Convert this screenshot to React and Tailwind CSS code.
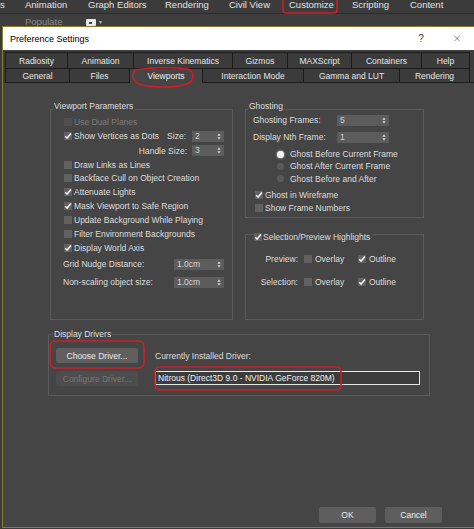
import React from "react";
import { X } from "lucide-react";

const menus = [
  { t: "s", w: "w-[25px]" },
  { t: "Animation", w: "w-[63px]" },
  { t: "Graph Editors", w: "w-[77px]" },
  { t: "Rendering", w: "w-[64px]" },
  { t: "Civil View", w: "w-[60px]" },
  { t: "Customize", w: "w-[63px]" },
  { t: "Scripting", w: "w-[58px]" },
  { t: "Content", w: "w-[64px]" },
];

const tabsTop = [
  { t: "Radiosity", w: "w-[62px]" },
  { t: "Animation", w: "w-[66px]" },
  { t: "Inverse Kinematics", w: "w-[99px]" },
  { t: "Gizmos", w: "w-[55px]" },
  { t: "MAXScript", w: "w-[64px]" },
  { t: "Containers", w: "w-[70px]" },
  { t: "Help", w: "w-[49px] border-r" },
];

const tabsBottom = [
  { t: "General", w: "w-[64px]" },
  { t: "Files", w: "w-[60px]" },
  { t: "Viewports", w: "w-[73px]", active: true },
  { t: "Interaction Mode", w: "w-[101px]" },
  { t: "Gamma and LUT", w: "w-[96px]" },
  { t: "Rendering", w: "w-[71px] border-r" },
];

// left group rows: [label, checked, disabled, height class]
const viewportChecks = [
  ["Draw Links as Lines", false, false, "h-[13px]"],
  ["Backface Cull on Object Creation", false, false, "h-[14px]"],
  ["Attenuate Lights", true, false, "h-[14px]"],
  ["Mask Viewport to Safe Region", true, false, "h-[13px]"],
  ["Update Background While Playing", false, false, "h-[15px]"],
  ["Filter Environment Backgrounds", false, false, "h-[14px]"],
  ["Display World Axis", true, false, "h-[14px]"],
];

const Check = ({ on, dim }) => (
  <span
    className={`inline-flex w-[8px] h-[8px] shrink-0 items-center justify-center ${
      dim ? "bg-[#4f4f4f]" : "bg-[#616161]"
    }`}
  >
    {on && (
      <svg width="8" height="8" viewBox="0 0 8 8">
        <path d="M1.2 4.2 L3.1 6.1 L6.9 1.5" fill="none" stroke="#f4f4f4" strokeWidth="1.5" />
      </svg>
    )}
  </span>
);

const Radio = ({ on }) => (
  <span
    className={`w-[7px] h-[7px] rounded-full shrink-0 ${
      on ? "bg-[#f2f2f2] shadow-[0_0_2px_#ffffff]" : "bg-[#5b5b5b]"
    }`}
  />
);

const Spin = ({ value, w }) => (
  <div className={`${w} h-[11px] bg-[#5c5c5c] flex items-center justify-between pl-[3px] pr-[3px] text-[#d4d4d4] leading-[11px]`}>
    <span>{value}</span>
    <svg width="4" height="7" viewBox="0 0 4 7">
      <path d="M2 0.4 L3.7 2.8 H0.3Z M2 6.6 L3.7 4.2 H0.3Z" fill="#dadada" />
    </svg>
  </div>
);

const Btn = ({ children, w, dim }) => (
  <div
    className={`${w} h-[15px] rounded-[2px] flex items-center justify-center ${
      dim ? "bg-[#4d4d4d] text-[#777777]" : "bg-[#5f5f5f] text-[#ececec]"
    }`}
  >
    {children}
  </div>
);

export default function App() {
  return (
    <div className="relative w-[474px] h-[529px] overflow-hidden bg-[#3b3b3b] font-['Liberation_Sans',Arial,sans-serif] text-[8.5px] text-[#dedede] leading-[10px] flex flex-col">
      {/* main menu bar */}
      <div className="h-[14px] flex border-b border-[#2c2c2c] text-[9.5px] text-[#e2e2e2] shrink-0">
        {menus.map((m) => (
          <div key={m.t} className={`${m.w} shrink-0 leading-[10px] pt-0`}>
            {m.t}
          </div>
        ))}
      </div>

      {/* ribbon row under menu */}
      <div className="h-[12px] flex items-start shrink-0 overflow-hidden bg-[#3e3e3e]">
        <span className="ml-[25px] mt-[3px] text-[9.5px] text-[#8a8a8a]">Populate</span>
        <span className="ml-[23px] mt-[5px] flex items-start gap-[3px]">
          <span className="w-[10px] h-[7px] bg-[#e8e8e8] rounded-[1px] flex items-center justify-center">
            <span className="w-[3px] h-[2px] bg-[#444444]" />
          </span>
          <span className="text-[6px] text-[#bbbbbb] leading-[6px]">▾</span>
        </span>
      </div>

      {/* dialog */}
      <div className="ml-[2px] w-[480px] h-[502px] shrink-0 border-l border-t border-b border-[#8f7d2e] flex flex-col bg-[#454545]">
        <div className="h-[23px] bg-white flex items-center text-black text-[9px] shrink-0">
          <span className="pl-[7px] flex-1">Preference Settings</span>
          <span className="w-[10px] text-center text-[10px] text-[#333333]">?</span>
          <span className="w-[10px] ml-[26px] mr-[20px] flex items-center justify-center">
            <X size={11} strokeWidth={1.3} color="#222222" />
          </span>
        </div>

        {/* tabs */}
        <div className="pt-[2px] bg-[#3d3d3d] shrink-0">
          <div className="flex pl-[2px] h-[16px]">
            {tabsTop.map((t) => (
              <div
                key={t.t}
                className={`${t.w} shrink-0 border-l border-t border-[#1c1c1c] bg-[#3b3b3b] text-[#e6e6e6] flex items-center justify-center`}
              >
                {t.t}
              </div>
            ))}
          </div>
          <div className="flex pl-[2px] h-[15px]">
            {tabsBottom.map((t) =>
              t.active ? (
                <div
                  key={t.t}
                  className={`${t.w} shrink-0 border-l border-t border-[#1c1c1c] bg-[#454545] text-[#f0f0f0] flex items-center justify-center`}
                >
                  {t.t}
                </div>
              ) : (
                <div
                  key={t.t}
                  className={`${t.w} shrink-0 border-l border-t border-b border-[#1c1c1c] bg-[#3b3b3b] text-[#e6e6e6] flex items-center justify-center`}
                >
                  {t.t}
                </div>
              )
            )}
            <div className="flex-1 border-b border-[#1c1c1c]" />
          </div>
        </div>

        {/* page content */}
        <div className="flex-1 flex flex-col pl-[47px] pr-[40px]">
          <div className="flex gap-[12px] mt-[18px]">
            {/* Viewport Parameters */}
            <fieldset className="w-[183px] border border-[#5b5b5b] pb-[31px] shrink-0">
              <legend className="ml-[2px] px-[1px] pb-[6px] leading-[10px]">Viewport Parameters</legend>
              <div className="h-[14px] -mt-[2px] flex items-center pl-[13px] gap-[2px] text-[#7c7c7c]">
                <Check dim />
                <span>Use Dual Planes</span>
              </div>
              <div className="h-[14px] flex items-center pl-[13px] pr-[8px] gap-[2px]">
                <Check on />
                <span className="flex-1">Show Vertices as Dots</span>
                <span className="mr-[4px]">Size:</span>
                <Spin value="2" w="w-[32px]" />
              </div>
              <div className="h-[15px] flex items-center justify-end pr-[8px]">
                <span className="mr-[5px]">Handle Size:</span>
                <Spin value="3" w="w-[32px]" />
              </div>
              {viewportChecks.map(([label, on, dim, h]) => (
                <div key={label} className={`${h} flex items-center pl-[13px] gap-[2px]`}>
                  <Check on={on} dim={dim} />
                  <span>{label}</span>
                </div>
              ))}
              <div className="h-[12px] mt-[3px] flex items-center pl-[12px] pr-[8px]">
                <span className="flex-1">Grid Nudge Distance:</span>
                <Spin value="1.0cm" w="w-[50px]" />
              </div>
              <div className="h-[12px] mt-[6px] flex items-center pl-[12px] pr-[8px]">
                <span className="flex-1">Non-scaling object size:</span>
                <Spin value="1.0cm" w="w-[50px]" />
              </div>
            </fieldset>

            {/* right column */}
            <div className="w-[179px] flex flex-col shrink-0">
              <fieldset className="border border-[#5b5b5b] pb-[3px]">
                <legend className="ml-[2px] px-[1px] pb-[6px] leading-[10px]">Ghosting</legend>
                <div className="h-[12px] -mt-[3px] flex items-center pl-[7px]">
                  <span className="w-[84px]">Ghosting Frames:</span>
                  <Spin value="5" w="w-[52px]" />
                </div>
                <div className="h-[12px] mt-[5px] flex items-center pl-[7px]">
                  <span className="w-[84px]">Display Nth Frame:</span>
                  <Spin value="1" w="w-[52px]" />
                </div>
                <div className="h-[12px] mt-[5px] flex items-center pl-[31px] gap-[6px]">
                  <Radio on />
                  <span>Ghost Before Current Frame</span>
                </div>
                <div className="h-[12px] flex items-center pl-[31px] gap-[6px]">
                  <Radio />
                  <span>Ghost After Current Frame</span>
                </div>
                <div className="h-[13px] flex items-center pl-[31px] gap-[6px]">
                  <Radio />
                  <span>Ghost Before and After</span>
                </div>
                <div className="h-[13px] mt-[3px] flex items-center pl-[9px] gap-[2px]">
                  <Check on />
                  <span>Ghost in Wireframe</span>
                </div>
                <div className="h-[13px] flex items-center pl-[9px] gap-[2px]">
                  <Check />
                  <span>Show Frame Numbers</span>
                </div>
              </fieldset>

              <fieldset className="mt-[8px] border border-[#5b5b5b] pt-[11px] pb-[31px]">
                <legend className="ml-[8px] pt-[6px] leading-[10px] flex items-center gap-[1px] pr-[2px]">
                  <Check on />
                  <span>Selection/Preview Highlights</span>
                </legend>
                <div className="h-[12px] flex items-center pl-[2px]">
                  <span className="w-[50px] text-right">Preview:</span>
                  <span className="w-[54px] ml-[6px] flex items-center gap-[3px]">
                    <Check />
                    <span>Overlay</span>
                  </span>
                  <span className="flex items-center gap-[3px]">
                    <Check on />
                    <span>Outline</span>
                  </span>
                </div>
                <div className="h-[12px] mt-[11px] flex items-center pl-[2px]">
                  <span className="w-[50px] text-right">Selection:</span>
                  <span className="w-[54px] ml-[6px] flex items-center gap-[3px]">
                    <Check />
                    <span>Overlay</span>
                  </span>
                  <span className="flex items-center gap-[3px]">
                    <Check on />
                    <span>Outline</span>
                  </span>
                </div>
              </fieldset>
            </div>
          </div>

          {/* Display Drivers */}
          <fieldset className="mt-[9px] -ml-[2px] w-[382px] border border-[#5b5b5b] pt-[9px] pb-[9px] pl-[7px] pr-[9px]">
            <legend className="ml-[-3px] px-[1px] leading-[10px]">Display Drivers</legend>
            <div className="flex">
              <div className="flex flex-col gap-[8px] shrink-0">
                <Btn w="w-[82px]">Choose Driver...</Btn>
                <Btn w="w-[82px]" dim>
                  Configure Driver...
                </Btn>
              </div>
              <div className="flex-1 ml-[17px] flex flex-col">
                <span className="mt-[3px] leading-[10px]">Currently Installed Driver:</span>
                <div className="mt-[10px] h-[14px] border border-[#e8e8e8] bg-[#3c3c3c] flex items-center pl-[2px] text-[#f2f2f2]">
                  Nitrous (Direct3D 9.0 - NVIDIA GeForce 820M)
                </div>
              </div>
            </div>
          </fieldset>

          <div className="mt-auto pb-[4px] flex justify-end gap-[9px]">
            <div className="w-[57px] h-[16px] rounded-[2px] bg-[#5e5e5e] text-[#ececec] flex items-center justify-center">OK</div>
            <div className="w-[57px] h-[16px] rounded-[2px] bg-[#5e5e5e] text-[#ececec] flex items-center justify-center">Cancel</div>
          </div>
        </div>
      </div>

      {/* red hand-drawn annotations */}
      <svg className="absolute inset-0 pointer-events-none" width="474" height="529" viewBox="0 0 474 529">
        <g fill="none" stroke="#cc1f2a" strokeWidth="1.6" strokeLinecap="round">
          <path d="M283 -1 V11 Q283 13 286 13 H334 Q337 13 337 10 V-1" />
          <path d="M135 70 Q160 66 188 69 Q195 72 192 80 Q188 87 163 87 Q138 87 134 80 Q132 74 135 70 Z" />
          <path d="M55 341 H138 Q144 341 144 347 V362 Q144 368 138 368 H56 Q50 368 50 362 V347 Q50 341 55 341 Z" />
          <path d="M160 367 H336 Q341 367 341 372 V386 Q341 390 336 390 H160 Q155 390 155 385 V372 Q155 367 160 367 Z" />
        </g>
      </svg>
    </div>
  );
}
